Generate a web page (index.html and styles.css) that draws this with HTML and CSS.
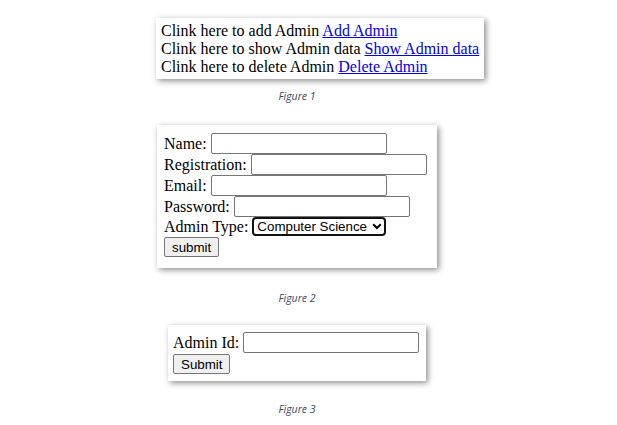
FILE: index.html
```html
<!DOCTYPE html>
<html lang="en">
<head>
    <meta charset="UTF-8">
    <title>Admin figures</title>
    <link rel="stylesheet" href="styles.css">
</head>
<body>
    <div class="doc">
        <!-- Figure 1: menu -->
        <div class="shot shot-menu">
            <div class="line">Clink here to add Admin <a href="#">Add Admin</a></div>
            <div class="line">Clink here to show Admin data <a href="#">Show Admin data</a></div>
            <div class="line">Clink here to delete Admin <a href="#">Delete Admin</a></div>
        </div>
        <div class="caption cap-1">Figure 1</div>

        <!-- Figure 2: add form -->
        <div class="shot shot-form">
            <div class="row">Name: <input class="field" type="text"></div>
            <div class="row">Registration: <input class="field" type="text"></div>
            <div class="row">Email: <input class="field" type="text"></div>
            <div class="row">Password: <input class="field" type="password"></div>
            <div class="row row-select">Admin Type:
                <span class="select-wrap">
                    <select class="select">
                        <option>Computer Science</option>
                    </select>
                    <svg class="chevron" width="10" height="7" viewBox="0 0 10 7">
                        <path d="M1.2 1.3 L5 5 L8.8 1.3" fill="none" stroke="#000" stroke-width="2"/>
                    </svg>
                </span>
            </div>
            <div class="btn-row"><button class="btn">submit</button></div>
        </div>
        <div class="caption cap-2">Figure 2</div>

        <!-- Figure 3: delete form -->
        <div class="shot shot-delete">
            <div class="row">Admin Id: <input class="field" type="text"></div>
            <div class="btn-row"><button class="btn">Submit</button></div>
        </div>
        <div class="caption cap-3">Figure 3</div>
    </div>
</body>
</html>
```

FILE: styles.css
```css
/* page */
body, html {
    margin: 0;
    padding: 0;
    background-color: #fff;
}

.doc {
    width: 594px;
    display: flex;
    flex-direction: column;
    align-items: center;
    padding-top: 18px;
}

/* screenshot boxes */
.shot {
    box-sizing: border-box;
    background-color: #fff;
    box-shadow: 2px 2px 6px rgba(0, 0, 0, 0.45);
    font-family: "Liberation Serif", "Times New Roman", serif;
    font-size: 16px;
    color: #000;
}

.shot-menu {
    width: 328px;
    margin-left: 46px;
    padding: 4px 5px 3px 5px;
}

.line {
    line-height: 18px;
    white-space: nowrap;
}

.line a {
    color: #0000ee;
}

.shot-form {
    width: 280px;
    padding: 8px 7px 10px 7px;
}

.shot-delete {
    width: 258px;
    padding: 7px 5px 6px 5px;
}

.row {
    display: flex;
    align-items: center;
    gap: 4px;
    height: 21px;
    white-space: nowrap;
}

.row-select {
    height: 19px;
    gap: 4px;
}

.field {
    box-sizing: border-box;
    width: 176px;
    height: 21px;
    margin: 0;
    border: 1px solid #767676;
    border-radius: 2px;
    background: #fff;
    padding: 1px 2px;
}

.select-wrap {
    position: relative;
    display: inline-block;
    height: 19px;
}

.select {
    appearance: none;
    -webkit-appearance: none;
    box-sizing: border-box;
    width: 134px;
    height: 19px;
    margin: 0;
    padding: 0 0 0 3px;
    border: 2px solid #111;
    border-radius: 4px;
    background: #fff;
    font-family: "Liberation Sans", Arial, sans-serif;
    font-size: 13.33px;
    color: #000;
}

.chevron {
    position: absolute;
    right: 4px;
    top: 6px;
}

.btn-row {
    display: flex;
    height: 21px;
    align-items: flex-start;
    margin-top: 1px;
}

.btn {
    box-sizing: border-box;
    height: 20px;
    margin: 0;
    padding: 0 7px;
    border: 1px solid #767676;
    border-radius: 2px;
    background-color: #efefef;
    font-family: "Liberation Sans", Arial, sans-serif;
    font-size: 13.33px;
    color: #000;
}

/* captions */
.caption {
    font-family: "Open Sans", sans-serif;
    font-style: italic;
    font-size: 10.5px;
    line-height: 14px;
    color: #3e4a5c;
}

.cap-1 { margin-top: 10px; margin-bottom: 22px; }
.cap-2 { margin-top: 23px; margin-bottom: 20px; }
.cap-3 { margin-top: 21px; }
```
